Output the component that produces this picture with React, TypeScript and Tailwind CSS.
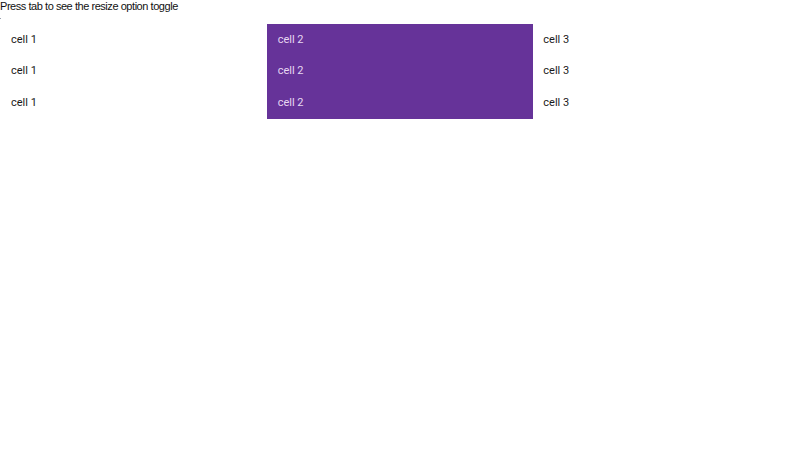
export default function App() {
  const rows = [0, 1, 2];
  return (
    <div className="w-[800px] h-[450px] bg-white font-['Liberation_Sans',Arial,sans-serif]">
      <p className="text-[11px] leading-[12px] tracking-[-0.45px] text-[#111]">Press tab to see the resize option toggle</p>
      <div className="h-[12px] flex items-center">
        <span className="w-px h-px bg-gray-400" />
      </div>
      <div className="grid grid-cols-3 font-['Roboto',sans-serif] text-[11px]">
        {rows.map((r) => (
          <div key={r} className="contents">
            <div className="h-[31.5px] flex items-center px-[11px] text-[#1a1a1a]">cell 1</div>
            <div className="h-[31.5px] flex items-center px-[11px] bg-[#663399] text-[#e6d8f2]">cell 2</div>
            <div className="h-[31.5px] flex items-center px-[10px] text-[#1a1a1a]">cell 3</div>
          </div>
        ))}
      </div>
    </div>
  );
}
